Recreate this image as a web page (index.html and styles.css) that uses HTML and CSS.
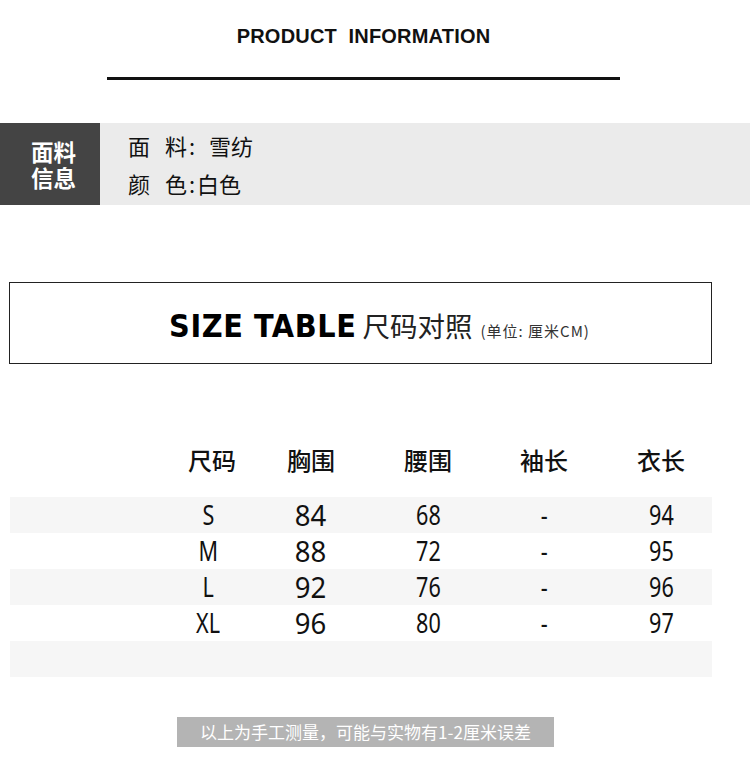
FILE: index.html
```html
<!DOCTYPE html>
<html lang="zh">
<head>
<meta charset="utf-8">
<link rel="stylesheet" href="styles.css">
</head>
<body>
<div class="page">
  <header class="head">
    <h1 class="head-title">PRODUCT&nbsp; INFORMATION</h1>
    <div class="head-rule"></div>
  </header>

  <section class="info">
    <div class="info-label">
      <div class="label-line">面料</div>
      <div class="label-line">信息</div>
    </div>
    <div class="info-body">
      <div class="info-line">面<span class="gap"></span>料<span class="colon">:</span><span class="gap2"></span>雪纺</div>
      <div class="info-line">颜<span class="gap"></span>色<span class="colon">:</span>白色</div>
    </div>
  </section>

  <section class="size-box">
    <span class="size-en">SIZE TABLE</span>
    <span class="size-cn">尺码对照</span>
    <span class="size-unit">(单位: 厘米CM)</span>
  </section>

  <section class="table">
    <div class="row row-head">
      <div class="cell">尺码</div>
      <div class="cell">胸围</div>
      <div class="cell">腰围</div>
      <div class="cell">袖长</div>
      <div class="cell">衣长</div>
    </div>
    <div class="row row-data stripe">
      <div class="cell first"><span class="v">S</span></div><div class="cell big"><span class="v">84</span></div><div class="cell"><span class="v">68</span></div><div class="cell"><span class="v">-</span></div><div class="cell"><span class="v">94</span></div>
    </div>
    <div class="row row-data">
      <div class="cell first"><span class="v">M</span></div><div class="cell big"><span class="v">88</span></div><div class="cell"><span class="v">72</span></div><div class="cell"><span class="v">-</span></div><div class="cell"><span class="v">95</span></div>
    </div>
    <div class="row row-data stripe">
      <div class="cell first"><span class="v">L</span></div><div class="cell big"><span class="v">92</span></div><div class="cell"><span class="v">76</span></div><div class="cell"><span class="v">-</span></div><div class="cell"><span class="v">96</span></div>
    </div>
    <div class="row row-data">
      <div class="cell first"><span class="v">XL</span></div><div class="cell big"><span class="v">96</span></div><div class="cell"><span class="v">80</span></div><div class="cell"><span class="v">-</span></div><div class="cell"><span class="v">97</span></div>
    </div>
    <div class="row row-data stripe"></div>
  </section>

  <footer class="note">以上为手工测量，可能与实物有1-2厘米误差</footer>
</div>
</body>
</html>
```

FILE: styles.css
```css
* { box-sizing: border-box; margin: 0; padding: 0; }
html, body { background: #fff; }
body {
  width: 750px;
  height: 776px;
  overflow: hidden;
  font-family: "Noto Sans CJK SC", "Noto Sans", sans-serif;
  color: #111;
}
.page { width: 750px; }

.head { padding-top: 24px; }
.head-title {
  text-align: center;
  font-family: "Liberation Sans", "Noto Sans CJK SC", sans-serif;
  font-weight: bold;
  font-size: 20px;
  letter-spacing: 0.2px;
  line-height: 24px;
  color: #111;
  margin-left: -23px;
}
.head-rule {
  width: 513px;
  height: 3px;
  background: #111;
  margin: 29px 0 0 107px;
}

.info {
  display: flex;
  height: 82px;
  margin-top: 43px;
  background: #ebebeb;
}
.info-label {
  width: 100px;
  flex: none;
  background: #444;
  color: #fff;
  font-weight: bold;
  font-size: 22.5px;
  padding: 15px 0 0 31px;
}
.label-line {
  height: 26px;
  line-height: 26px;
}
.info-body {
  padding: 3px 0 0 28px;
  font-size: 22px;
  line-height: 38px;
  color: #111;
}
.gap { display: inline-block; width: 15px; }
.gap2 { display: inline-block; width: 12px; }
.colon {
  display: inline-block;
  width: 10px;
  text-align: center;
}

.size-box {
  margin: 77px 0 0 9px;
  width: 703px;
  height: 82px;
  border: 1px solid #222;
  display: flex;
  align-items: baseline;
  justify-content: center;
  padding: 22px 0 0 38px;
}
.size-en {
  font-family: "DejaVu Sans Condensed", "DejaVu Sans", sans-serif;
  font-weight: bold;
  font-size: 32px;
  letter-spacing: 0.6px;
  color: #000;
}
.size-cn {
  font-size: 27.5px;
  margin-left: 6px;
  color: #222;
}
.size-unit {
  font-size: 15px;
  letter-spacing: 1px;
  margin-left: 8px;
  color: #333;
}

.table { margin-top: 73px; }
.row {
  display: grid;
  grid-template-columns: 100px 98px 136px 96px 138px;
  margin: 0 38px 0 10px;
  padding-left: 152px;
}
.row-head {
  height: 60px;
  padding-top: 5px;
  font-size: 24px;
  font-weight: 500;
  line-height: 36px;
  color: #111;
}
.row-data {
  height: 36px;
  font-family: "Noto Sans", sans-serif;
  font-size: 27px;
  line-height: 36px;
  color: #111;
}
.stripe { background: #f6f6f6; }
.cell { text-align: center; }
.cell.first { padding-right: 8px; }
.v { display: inline-block; transform: scaleX(0.8); }
.row-data .cell.big { font-size: 29px; }
.row-data .cell.big .v { transform: scaleX(0.95); }

.note {
  margin: 40px 0 0 177px;
  width: 377px;
  height: 30px;
  background: #b4b4b4;
  color: #fff;
  font-size: 17px;
  line-height: 30px;
  text-align: center;
}
```
